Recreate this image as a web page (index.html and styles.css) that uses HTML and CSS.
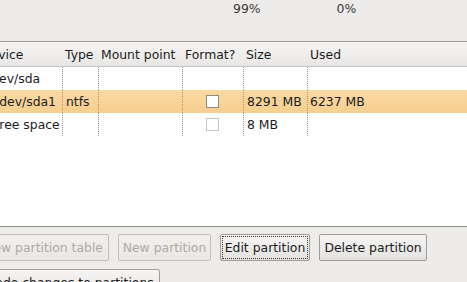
FILE: index.html
```html
<!DOCTYPE html>
<html>
<head>
<meta charset="utf-8">
<link rel="stylesheet" href="styles.css">
</head>
<body>
<div class="usage">
  <span class="pct pct-a">99%</span>
  <span class="pct pct-b">0%</span>
</div>
<div class="table">
  <div class="hrow">
    <div class="hc c1"><span class="dev-h">Device</span></div>
    <div class="hc c2">Type</div>
    <div class="hc c3">Mount point</div>
    <div class="hc c4">Format?</div>
    <div class="hc c5">Size</div>
    <div class="hc c6">Used</div>
  </div>
  <div class="row">
    <div class="cell c1"><span class="dev lvl0">/dev/sda</span></div>
    <div class="cell c2"></div>
    <div class="cell c3"></div>
    <div class="cell c4"></div>
    <div class="cell c5"></div>
    <div class="cell c6"></div>
  </div>
  <div class="row sel">
    <div class="cell c1"><span class="dev lvl1">/dev/sda1</span></div>
    <div class="cell c2">ntfs</div>
    <div class="cell c3"></div>
    <div class="cell c4"><span class="check"></span></div>
    <div class="cell c5">8291 MB</div>
    <div class="cell c6">6237 MB</div>
  </div>
  <div class="row">
    <div class="cell c1"><span class="dev lvl1">free space</span></div>
    <div class="cell c2"></div>
    <div class="cell c3"></div>
    <div class="cell c4"><span class="check off"></span></div>
    <div class="cell c5">8 MB</div>
    <div class="cell c6"></div>
  </div>
</div>
<div class="buttons">
  <button class="btn disabled b-table">New partition table</button>
  <button class="btn disabled b-new">New partition</button>
  <button class="btn b-edit"><span class="focus-ring">Edit partition</span></button>
  <button class="btn b-del">Delete partition</button>
</div>
<div class="buttons2">
  <button class="btn undo">Undo changes to partitions</button>
</div>
</body>
</html>
```
FILE: styles.css
```css
html, body {
  margin: 0;
  padding: 0;
  background: #edecea;
  width: 467px;
  height: 282px;
  overflow: hidden;
  font-family: "DejaVu Sans", sans-serif;
  font-size: 12.4px;
  color: #1c1c1c;
}

.usage {
  height: 41px;
  display: flex;
  align-items: flex-start;
  padding-top: 1px;
  box-sizing: border-box;
  color: #3a3a3a;
}
.pct-a { margin-left: 233px; }
.pct-b { margin-left: 76px; }

.table {
  background: #ffffff;
  border-top: 1px solid #9c9a96;
  border-bottom: 1px solid #8f8d89;
  height: 186px;
  box-sizing: border-box;
}

.hrow, .row {
  display: grid;
  grid-template-columns: 62px 36px 84px 61px 64px 1fr;
}

.hrow {
  height: 24px;
  background: linear-gradient(#f5f4f3, #e8e7e5);
  border-bottom: 1px solid #c9c6c1;
}
.hc {
  display: flex;
  align-items: center;
  padding-left: 3px;
  white-space: nowrap;
  overflow: hidden;
  position: relative;
}
.hc + .hc::before {
  content: "";
  position: absolute;
  left: -1px;
  top: 4px;
  bottom: 3px;
  border-left: 1px solid #cfccc7;
}
.hc.c1 { padding-left: 0; }
.dev-h { margin-left: -19px; }

.row {
  height: 23px;
}
.cell {
  display: flex;
  align-items: center;
  padding-left: 3px;
  white-space: nowrap;
  overflow: hidden;
}
.cell + .cell {
  border-left: 1px dotted #9a9a9a;
}
.cell.c1 { padding-left: 0; }
.cell.c4 { justify-content: center; padding-left: 0; padding-right: 2px; }
.cell.c6 { padding-left: 2px; }

.dev.lvl0 { margin-left: -13px; }
.dev.lvl1 { margin-left: -5px; }

.row.sel {
  background: linear-gradient(#f9d9a4, #f6cf8f);
}
.row.sel .cell + .cell {
  border-left-color: #b9945a;
}

.check {
  width: 11px;
  height: 11px;
  border: 1px solid #8e8b86;
  background: #ffffff;
  display: block;
}
.check.off {
  border-color: #c9c6c2;
}

.buttons {
  display: flex;
  gap: 9px;
  margin-top: 7px;
  margin-left: -22px;
}
.btn {
  font-family: "DejaVu Sans", sans-serif;
  font-size: 12.4px;
  color: #1c1c1c;
  height: 27px;
  padding: 0;
  box-sizing: border-box;
  border: 1px solid #a19e98;
  border-radius: 2px;
  background: linear-gradient(#f6f5f4, #e4e2df);
  white-space: nowrap;
  margin: 0;
  text-align: center;
  flex: none;
}
.btn.disabled {
  color: #aeaaa3;
  border-color: #c3c0ba;
  background: linear-gradient(#f1f0ee, #e9e8e5);
}
.b-table { width: 131px; text-align: right; padding-right: 5px; }
.b-new { width: 93px; }
.b-edit { width: 90px; }
.b-del { width: 108px; }
.focus-ring {
  display: inline-block;
  border: 1px dotted #3a3a3a;
  padding: 3px 2px;
}

.buttons2 {
  margin-top: 8px;
  margin-left: -20px;
}
.btn.undo {
  padding: 0 5px;
}
```
